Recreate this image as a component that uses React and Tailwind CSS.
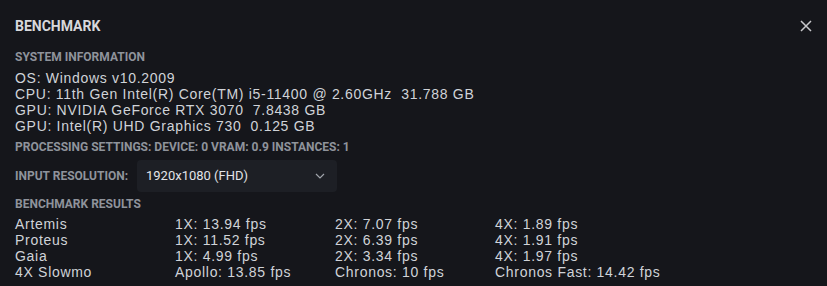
const results = [
  ["Artemis", "1X: 13.94 fps", "2X: 7.07 fps", "4X: 1.89 fps"],
  ["Proteus", "1X: 11.52 fps", "2X: 6.39 fps", "4X: 1.91 fps"],
  ["Gaia", "1X: 4.99 fps", "2X: 3.34 fps", "4X: 1.97 fps"],
  ["4X Slowmo", "Apollo: 13.85 fps", "Chronos: 10 fps", "Chronos Fast: 14.42 fps"],
];

export default function App() {
  return (
    <div className="w-[827px] h-[286px] bg-[#15161b] text-[#d4d4d8] px-[15px] pt-[15px] overflow-hidden">
      <div className="flex items-center justify-between h-[22px]">
        <h1 className="font-['Roboto',sans-serif] font-bold text-[14px] text-[#d8d8dc]">BENCHMARK</h1>
        <button className="mr-[-5px] w-[22px] h-[22px] flex items-center justify-center text-[#c8c8cc]">
          <svg width="12" height="12" viewBox="0 0 12 12" fill="none" stroke="currentColor" strokeWidth="1.5">
            <path d="M1 1L11 11M11 1L1 11" />
          </svg>
        </button>
      </div>

      <h2 className="mt-[12px] font-['Roboto',sans-serif] font-bold text-[12px] leading-[16px] text-[#8f939b]">
        SYSTEM INFORMATION
      </h2>
      <div className="mt-[5px] font-['Liberation_Sans',sans-serif] text-[14px] tracking-[0.7px] leading-[16px] text-[#d0d3d8] whitespace-pre">
        <div>OS: Windows v10.2009</div>
        <div>CPU: 11th Gen Intel(R) Core(TM) i5-11400 @ 2.60GHz  31.788 GB</div>
        <div>GPU: NVIDIA GeForce RTX 3070  7.8438 GB</div>
        <div>GPU: Intel(R) UHD Graphics 730  0.125 GB</div>
      </div>

      <h2 className="mt-[5px] font-['Roboto',sans-serif] font-bold text-[12px] leading-[16px] text-[#8f939b]">
        PROCESSING SETTINGS: DEVICE: 0 VRAM: 0.9 INSTANCES: 1
      </h2>

      <div className="mt-[5px] flex items-center h-[32px]">
        <span className="w-[122px] font-['Roboto',sans-serif] font-bold text-[12px] text-[#8f939b]">INPUT RESOLUTION:</span>
        <div className="w-[200px] h-[32px] rounded-[4px] bg-[#1d1f25] flex items-center justify-between pl-[9px] pr-[12px]">
          <span className="font-['Roboto',sans-serif] text-[13px] text-[#e2e4e8]">1920x1080 (FHD)</span>
          <svg width="10" height="6" viewBox="0 0 10 6" fill="none" stroke="#a0a4ab" strokeWidth="1.2">
            <path d="M1 1L5 5L9 1" />
          </svg>
        </div>
      </div>

      <h2 className="mt-[4px] font-['Roboto',sans-serif] font-bold text-[12px] leading-[16px] text-[#8f939b]">
        BENCHMARK RESULTS
      </h2>
      <div className="mt-[4px] font-['Liberation_Sans',sans-serif] text-[14px] tracking-[0.7px] leading-[16px] text-[#d0d3d8]">
        {results.map((row) => (
          <div key={row[0]} className="grid grid-cols-[160px_160px_160px_1fr]">
            {row.map((cell) => (
              <span key={cell}>{cell}</span>
            ))}
          </div>
        ))}
      </div>
    </div>
  );
}
